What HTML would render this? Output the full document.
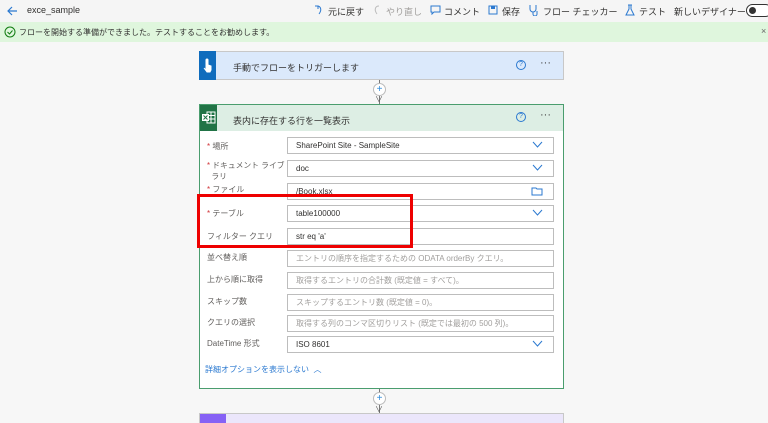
<!DOCTYPE html>
<html><head><meta charset="utf-8"><style>
*{box-sizing:border-box;margin:0;padding:0}
html,body{width:768px;height:423px;overflow:hidden}
body{background:#f7f7f7;font-family:"Liberation Sans","Noto Sans CJK JP",sans-serif;font-size:9px;color:#323130;position:relative}
.a{position:absolute}
.top{left:0;top:0;width:768px;height:22px;background:#f5f5f5}
.tb{top:5px;font-size:9px;color:#323130;white-space:nowrap}
.ban{left:0;top:22px;width:768px;height:20px;background:#dff6dd}
.card{left:199px;width:365px;border:1px solid #c8c8c8}
.lbl{left:207px;font-size:8px;color:#605e5c;white-space:nowrap}
.req:before{content:"* ";color:#d13438}
.in{left:287px;width:267px;height:17px;border:1px solid #bdbdbd;background:#fff;font-size:8px;padding-left:8px;line-height:15px;white-space:nowrap;color:#323130}
.ph{color:#a19f9d}
.chev{position:absolute;right:10px;top:3px}
.plus{width:13px;height:13px;border:1px solid #bbb;border-radius:50%;background:#fff;color:#2b88d8;font-size:10px;line-height:11px;text-align:center}
.line{width:1px;background:#777}
</style></head><body>
<div class="a top"></div>
<svg class="a" style="left:6px;top:5px" width="12" height="12"><path d="M11 6H2M6 2L2 6l4 4" stroke="#2b79d0" fill="none" stroke-width="1.2"/></svg>
<div class="a tb" style="left:27px;top:5px">exce_sample</div>
<svg class="a" style="left:314px;top:5px" width="10" height="11"><path d="M3 1C7 1 8 5 5 9" stroke="#2b79d0" fill="none"/><path d="M1 1h3v3" stroke="#2b79d0" fill="none"/></svg><div class="a tb" style="left:328px">元に戻す</div>
<svg class="a" style="left:372px;top:5px" width="10" height="11"><path d="M7 1C3 1 2 5 5 9" stroke="#bbb" fill="none"/></svg><div class="a tb" style="left:386px;color:#a19f9d">やり直し</div>
<svg class="a" style="left:430px;top:5px" width="11" height="10"><path d="M1 1h9v6H4l-2 2V7H1z" stroke="#2b79d0" fill="none"/></svg><div class="a tb" style="left:444px">コメント</div>
<svg class="a" style="left:488px;top:5px" width="10" height="10"><rect x="1" y="1" width="8" height="8" fill="none" stroke="#2b79d0"/><rect x="3" y="1" width="4" height="3" fill="#2b79d0"/></svg><div class="a tb" style="left:502px">保存</div>
<svg class="a" style="left:528px;top:4px" width="11" height="12"><path d="M2 1v4a3 3 0 006 0V1M5 8v2a2 2 0 004 0V7" stroke="#2b79d0" fill="none"/></svg><div class="a tb" style="left:543px">フロー チェッカー</div>
<svg class="a" style="left:625px;top:4px" width="10" height="12"><path d="M3 1h4M4 1v4L1 11h8L6 5V1" stroke="#2b79d0" fill="none"/></svg><div class="a tb" style="left:639px">テスト</div>
<div class="a tb" style="left:674px">新しいデザイナー</div>
<div class="a" style="left:746px;top:4px;width:26px;height:13px;border:1px solid #333;border-radius:7px;background:#fff"></div>
<div class="a" style="left:749px;top:7px;width:7px;height:7px;border-radius:50%;background:#333"></div>
<div class="a ban"></div>
<svg class="a" style="left:4px;top:26px" width="12" height="12"><circle cx="6" cy="6" r="5" fill="none" stroke="#107c10"/><path d="M3.5 6l2 2 3-3.5" stroke="#107c10" fill="none"/></svg>
<div class="a" style="left:19px;top:27px;font-size:8px;color:#323130">フローを開始する準備ができました。テストすることをお勧めします。</div>
<div class="a" style="left:761px;top:26px;font-size:9px;color:#666">×</div>

<div class="a card" style="top:51px;height:29px;background:#dbe9fb"></div>
<div class="a" style="left:199px;top:51px;width:17px;height:29px;background:#0f6cbd"></div>
<svg class="a" style="left:202px;top:57px" width="11" height="16"><path d="M4 12V3a1 1 0 012 0v5l3 1v4l-1 2H5L2 11" stroke="#fff" fill="#fff" stroke-width="1"/></svg>
<div class="a" style="left:233px;top:61px;font-size:9px">手動でフローをトリガーします</div>
<div class="a" style="left:516px;top:60px;width:10px;height:10px;border:1px solid #2b79d0;border-radius:50%;color:#2b79d0;font-size:7px;text-align:center;line-height:8px">?</div>
<div class="a" style="left:540px;top:57px;font-size:11px;color:#444">···</div>
<div class="a line" style="left:379px;top:80px;height:26px"></div>
<div class="a plus" style="left:373px;top:83px">+</div>
<div class="a" style="left:375px;top:94px;font-size:8px;color:#555">∨</div>

<div class="a card" style="top:104px;height:285px;background:#fff;border-color:#4a9d6e"></div>
<div class="a" style="left:200px;top:105px;width:363px;height:26px;background:#ddeee4"></div>
<div class="a" style="left:200px;top:105px;width:17px;height:26px;background:#217346"></div>
<svg class="a" style="left:202px;top:111px" width="14" height="13"><rect x="5" y="1" width="8" height="11" fill="none" stroke="#fff"/><path d="M5 4.5h8M5 8h8M9 1v11" stroke="#fff"/><rect x="0" y="3" width="7" height="7" fill="#fff"/><path d="M1.5 4.5l4 4M5.5 4.5l-4 4" stroke="#217346"/></svg>
<div class="a" style="left:233px;top:114px;font-size:9px">表内に存在する行を一覧表示</div>
<div class="a" style="left:516px;top:112px;width:10px;height:10px;border:1px solid #2b79d0;border-radius:50%;color:#2b79d0;font-size:7px;text-align:center;line-height:8px">?</div>
<div class="a" style="left:540px;top:109px;font-size:11px;color:#444">···</div>

<div class="a lbl req" style="top:141px">場所</div>
<div class="a in" style="top:137px">SharePoint Site - SampleSite<svg class="chev" width="11" height="8"><path d="M1 1l4.5 5L10 1" stroke="#2b79d0" fill="none"/></svg></div>
<div class="a lbl req" style="top:160px;line-height:11px;font-size:7.8px">ドキュメント ライブ<br>&nbsp;&nbsp;ラリ</div>
<div class="a in" style="top:160px">doc<svg class="chev" width="11" height="8"><path d="M1 1l4.5 5L10 1" stroke="#2b79d0" fill="none"/></svg></div>
<div class="a lbl req" style="top:184px">ファイル</div>
<div class="a in" style="top:183px">/Book.xlsx<svg class="chev" style="top:2px" width="12" height="10"><path d="M1 2h4l1 1h5v6H1z" stroke="#2b79d0" fill="none"/></svg></div>
<div class="a lbl req" style="top:208px">テーブル</div>
<div class="a in" style="top:205px">table100000<svg class="chev" width="11" height="8"><path d="M1 1l4.5 5L10 1" stroke="#2b79d0" fill="none"/></svg></div>
<div class="a lbl" style="top:231px">フィルター クエリ</div>
<div class="a in" style="top:228px">str eq 'a'</div>
<div class="a lbl" style="top:252px">並べ替え順</div>
<div class="a in ph" style="top:250px">エントリの順序を指定するための ODATA orderBy クエリ。</div>
<div class="a lbl" style="top:274px">上から順に取得</div>
<div class="a in ph" style="top:272px">取得するエントリの合計数 (既定値 = すべて)。</div>
<div class="a lbl" style="top:296px">スキップ数</div>
<div class="a in ph" style="top:294px">スキップするエントリ数 (既定値 = 0)。</div>
<div class="a lbl" style="top:317px">クエリの選択</div>
<div class="a in ph" style="top:315px">取得する列のコンマ区切りリスト (既定では最初の 500 列)。</div>
<div class="a lbl" style="top:338px">DateTime 形式</div>
<div class="a in" style="top:336px">ISO 8601<svg class="chev" width="11" height="8"><path d="M1 1l4.5 5L10 1" stroke="#2b79d0" fill="none"/></svg></div>
<div class="a" style="left:205px;top:364px;font-size:8px;color:#2b79d0">詳細オプションを表示しない &nbsp;︿</div>

<div class="a" style="left:197px;top:194px;width:216px;height:54px;border:3px solid #ee0000"></div>

<div class="a line" style="left:379px;top:389px;height:24px"></div>
<div class="a plus" style="left:373px;top:392px">+</div>
<div class="a" style="left:375px;top:404px;font-size:8px;color:#555">∨</div>
<div class="a card" style="top:413px;height:20px;background:#ebe6fb"></div>
<div class="a" style="left:200px;top:414px;width:26px;height:12px;background:#8661f5"></div>
</body></html>
